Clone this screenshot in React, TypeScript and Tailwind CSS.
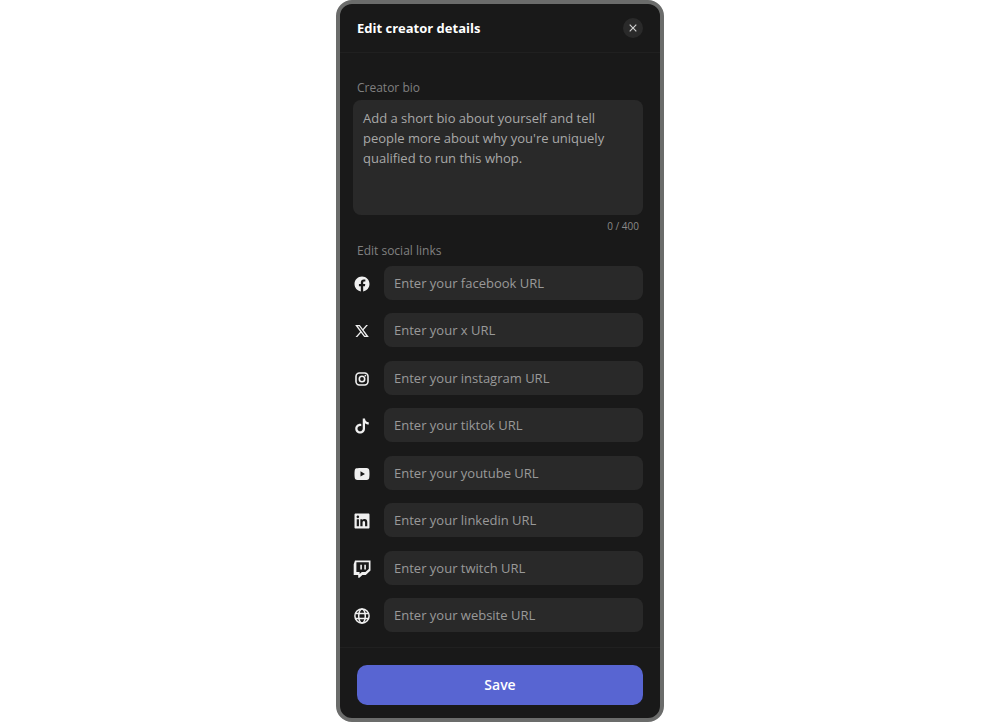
import React, { useState } from 'react';
import {
  RiCloseFill,
  RiFacebookCircleFill,
  RiLinkedinBoxFill,
  RiTiktokFill,
  RiTwitterXLine,
  RiYoutubeFill,
} from 'react-icons/ri';

const InstagramIcon = ({ className }: { className?: string }) => (
  <svg viewBox="0 0 16 16" fill="none" stroke="currentColor" strokeWidth="1.6" className={className}>
    <rect x="2" y="2" width="12" height="12" rx="3.4" />
    <circle cx="8" cy="8" r="2.7" />
    <circle cx="11.4" cy="4.6" r="0.9" fill="currentColor" stroke="none" />
  </svg>
);

const TwitchIcon = ({ className }: { className?: string }) => (
  <svg viewBox="0 0 18 18" fill="currentColor" className={className}>
    <path
      fillRule="evenodd"
      d="M2 0.5H17.5V10.6L12.8 15H9.4L6.4 17.8H5.2V15H0.7V4.2ZM3.4 2.2V12H6.6V14L8.8 12H12.4L15.8 9V2.2Z"
    />
    <path d="M7.3 4.8H8.9V9.4H7.3ZM11.3 4.8H12.9V9.4H11.3Z" />
  </svg>
);

const GlobeIcon = ({ className }: { className?: string }) => (
  <svg viewBox="0 0 18 18" fill="none" stroke="currentColor" strokeWidth="1.5" className={className}>
    <circle cx="9" cy="9" r="7.1" />
    <ellipse cx="9" cy="9" rx="3.3" ry="7.1" />
    <path d="M2.5 6.4H15.5M2.5 11.6H15.5" />
  </svg>
);

interface SocialField {
  name: string;
  icon: React.ComponentType<{ className?: string }>;
  size: string;
}

const MAX_BIO = 400;

const socialFields: SocialField[] = [
  { name: 'facebook', icon: RiFacebookCircleFill, size: 'size-[18px]' },
  { name: 'x', icon: RiTwitterXLine, size: 'size-4' },
  { name: 'instagram', icon: InstagramIcon, size: 'size-4' },
  { name: 'tiktok', icon: RiTiktokFill, size: 'size-[18px]' },
  { name: 'youtube', icon: RiYoutubeFill, size: 'size-[18px]' },
  { name: 'linkedin', icon: RiLinkedinBoxFill, size: 'size-5' },
  { name: 'twitch', icon: TwitchIcon, size: 'size-[18px]' },
  { name: 'website', icon: GlobeIcon, size: 'size-[18px]' },
];

export default function App() {
  const [bio, setBio] = useState('');
  const [links, setLinks] = useState<Record<string, string>>({});

  const handleSubmit = (e: React.FormEvent) => {
    e.preventDefault();
    console.log('Save:', { bio, links });
  };

  return (
    <main className="flex min-h-screen justify-center bg-white pb-px font-['Open_Sans',sans-serif]">
      <form
        onSubmit={handleSubmit}
        className="flex w-full max-w-[328px] flex-col rounded-2xl border-4 border-[#6b6c6b] bg-[#191919]"
      >
        <header className="flex items-center justify-between border-b border-[#202020] px-[17px] py-3.5">
          <h1 className="text-[13px] leading-5 font-bold text-white">Edit creator details</h1>
          <button
            type="button"
            aria-label="Close"
            className="flex size-5 items-center justify-center rounded-full bg-[#2a2a2a] text-[#d0d0d0]"
          >
            <RiCloseFill className="size-3.5" />
          </button>
        </header>

        <div className="flex flex-1 flex-col pt-[25px] pr-[17px] pb-[15px] pl-[13px]">
          <label htmlFor="bio" className="mb-0.5 pl-1 text-xs leading-5 text-[#808080]">
            Creator bio
          </label>
          <textarea
            id="bio"
            value={bio}
            maxLength={MAX_BIO}
            onChange={(e) => setBio(e.target.value)}
            placeholder="Add a short bio about yourself and tell people more about why you're uniquely qualified to run this whop."
            className="h-[115px] resize-none rounded-lg bg-[#292929] px-2.5 py-2 text-[13px] leading-5 text-white outline-none placeholder:text-[#a8a8a8]"
          />
          <p className="pt-px pr-1 text-right text-[10px] leading-5 text-[#8a8a8a]">
            {bio.length} / {MAX_BIO}
          </p>
          <h2 className="mt-[5px] pl-1 text-xs leading-5 text-[#808080]">Edit social links</h2>

          <ul className="mt-[5px] flex flex-1 flex-col justify-between">
            {socialFields.map(({ name, icon: Icon, size }) => (
              <li key={name} className="flex items-center gap-3.5">
                <label
                  htmlFor={name}
                  aria-label={name}
                  className="flex w-[17px] shrink-0 justify-center pt-0.5 text-[#f0f0f0]"
                >
                  <Icon className={`${size} shrink-0`} />
                </label>
                <input
                  id={name}
                  type="url"
                  value={links[name] ?? ''}
                  onChange={(e) => setLinks({ ...links, [name]: e.target.value })}
                  placeholder={`Enter your ${name} URL`}
                  className="h-[34px] min-w-0 flex-1 rounded-lg bg-[#292929] px-2.5 text-[13px] text-white outline-none placeholder:text-[#999999]"
                />
              </li>
            ))}
          </ul>
        </div>

        <footer className="border-t border-[#202020] px-[17px] pt-[17px] pb-[13px]">
          <button
            type="submit"
            className="h-10 w-full rounded-[10px] bg-[#5865d2] text-sm font-semibold text-white"
          >
            Save
          </button>
        </footer>
      </form>
    </main>
  );
}
